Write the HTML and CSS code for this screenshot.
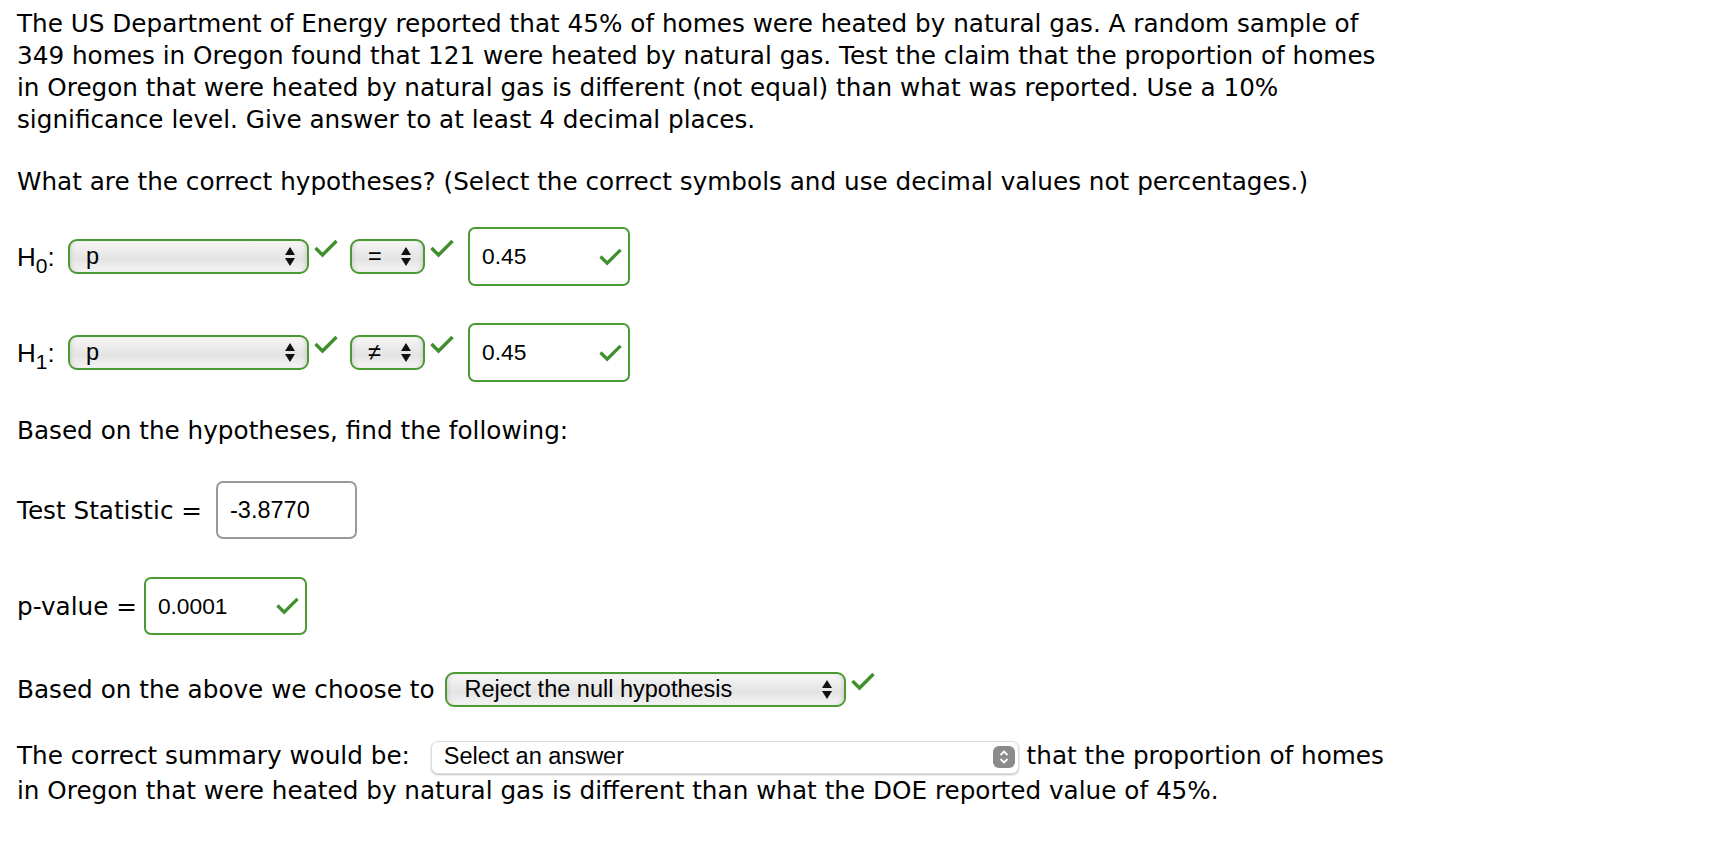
FILE: index.html
```html
<!DOCTYPE html>
<html>
<head>
    <title>Hypothesis Test - Proportion</title>
    <link rel="stylesheet" href="styles.css">
</head>
<body>
    <div class="question">
        <p class="intro">The US Department of Energy reported that 45% of homes were heated by natural gas. A random sample of 349 homes in Oregon found that 121 were heated by natural gas. Test the claim that the proportion of homes in Oregon that were heated by natural gas is different (not equal) than what was reported. Use a 10% significance level. Give answer to at least 4 decimal places.</p>

        <p class="ask">What are the correct hypotheses? (Select the correct symbols and use decimal values not percentages.)</p>

        <div class="hyp-row">
            <span class="hyp-label">H<sub>0</sub>:</span>
            <span class="pick pick-wide correct">
                <span class="pick-text">p</span>
                <svg class="updown" viewBox="0 0 10 19"><polygon points="5,0 10,8 0,8"/><polygon points="0,11 10,11 5,19"/></svg>
            </span>
            <svg class="tick" viewBox="0 0 24 35"><polyline points="1.5,9 8.5,16 22.5,2"/></svg>
            <span class="pick pick-small correct">
                <span class="pick-text">=</span>
                <svg class="updown" viewBox="0 0 10 19"><polygon points="5,0 10,8 0,8"/><polygon points="0,11 10,11 5,19"/></svg>
            </span>
            <svg class="tick" viewBox="0 0 24 35"><polyline points="1.5,9 8.5,16 22.5,2"/></svg>
            <span class="answer answer-hyp correct">
                <span class="answer-text">0.45</span>
                <svg class="tick-in" viewBox="0 0 24 18"><polyline points="1.5,8.5 8.5,15.5 22.5,1.5"/></svg>
            </span>
        </div>

        <div class="hyp-row hyp-row-alt">
            <span class="hyp-label">H<sub>1</sub>:</span>
            <span class="pick pick-wide correct">
                <span class="pick-text">p</span>
                <svg class="updown" viewBox="0 0 10 19"><polygon points="5,0 10,8 0,8"/><polygon points="0,11 10,11 5,19"/></svg>
            </span>
            <svg class="tick" viewBox="0 0 24 35"><polyline points="1.5,9 8.5,16 22.5,2"/></svg>
            <span class="pick pick-small correct">
                <span class="pick-text">&ne;</span>
                <svg class="updown" viewBox="0 0 10 19"><polygon points="5,0 10,8 0,8"/><polygon points="0,11 10,11 5,19"/></svg>
            </span>
            <svg class="tick" viewBox="0 0 24 35"><polyline points="1.5,9 8.5,16 22.5,2"/></svg>
            <span class="answer answer-hyp correct">
                <span class="answer-text">0.45</span>
                <svg class="tick-in" viewBox="0 0 24 18"><polyline points="1.5,8.5 8.5,15.5 22.5,1.5"/></svg>
            </span>
        </div>

        <p class="lead">Based on the hypotheses, find the following:</p>

        <div class="calc-row">
            <span class="calc-label">Test Statistic =</span>
            <span class="answer answer-stat">
                <span class="answer-text">-3.8770</span>
            </span>
        </div>

        <div class="calc-row calc-row-alt">
            <span class="calc-label">p-value =</span>
            <span class="answer answer-p correct">
                <span class="answer-text">0.0001</span>
                <svg class="tick-in" viewBox="0 0 24 18"><polyline points="1.5,8.5 8.5,15.5 22.5,1.5"/></svg>
            </span>
        </div>

        <div class="decide-row">
            <span>Based on the above we choose to</span>
            <span class="pick pick-decide correct">
                <span class="pick-text">Reject the null hypothesis</span>
                <svg class="updown" viewBox="0 0 10 19"><polygon points="5,0 10,8 0,8"/><polygon points="0,11 10,11 5,19"/></svg>
            </span>
            <svg class="tick" viewBox="0 0 24 35"><polyline points="1.5,9 8.5,16 22.5,2"/></svg>
        </div>

        <p class="summary">The correct summary would be:
            <span class="plain-pick">
                <span class="pick-text">Select an answer</span>
                <svg class="chev" viewBox="0 0 22 22"><rect x="0" y="0" width="22" height="22" rx="6"/><polyline points="7.5,9 11,5.5 14.5,9"/><polyline points="7.5,13 11,16.5 14.5,13"/></svg>
            </span>
            that the proportion of homes in Oregon that were heated by natural gas is different than what the DOE reported value of 45%.</p>
    </div>
</body>
</html>
```

FILE: styles.css
```css
body {
    margin: 0;
    padding: 0;
    background-color: #fff;
    color: #000;
    font-family: "DejaVu Sans", Verdana, sans-serif;
    font-size: 24.7px;
}

.question {
    width: 1386px;
    padding: 8px 0 0 17px;
}

.intro {
    margin: 0;
    line-height: 32px;
}

.ask {
    margin: 30px 0 0;
    line-height: 32px;
}

.lead {
    margin: 33px 0 0;
    line-height: 32px;
}

/* hypothesis rows */
.hyp-row {
    display: flex;
    align-items: center;
    height: 59px;
    margin-top: 29px;
}

.hyp-row-alt {
    margin-top: 37px;
}

.hyp-label {
    width: 51px;
    font-family: "Liberation Sans", Arial, sans-serif;
    font-size: 26px;
    line-height: 30px;
}

.hyp-label sub {
    font-size: 21px;
    vertical-align: -7px;
    line-height: 0;
}

/* mac style pull downs */
.pick {
    display: flex;
    align-items: center;
    justify-content: space-between;
    box-sizing: border-box;
    height: 35px;
    padding: 0 12px 0 16px;
    border: 2px solid #aaa;
    border-radius: 9px;
    background: linear-gradient(to bottom, #f7f7f7 0%, #e9e9e9 40%, #e4e4e4 60%, #f4f4f4 100%);
    box-shadow: inset 3px 0 4px -2px rgba(0, 0, 0, 0.12), inset -3px 0 4px -2px rgba(0, 0, 0, 0.12);
    font-family: "Liberation Sans", Arial, sans-serif;
    font-size: 23.5px;
}

.pick.correct {
    border-color: #4b9a34;
}

.pick-wide {
    width: 241px;
}

.pick-small {
    width: 75px;
    margin-left: 12px;
    padding-left: 16px;
}

.pick-decide {
    width: 401px;
    margin-left: 11px;
    padding-left: 17px;
}

.updown {
    width: 10px;
    height: 19px;
    flex-shrink: 0;
    fill: #111;
}

.tick {
    width: 24px;
    height: 35px;
    margin-left: 5px;
    flex-shrink: 0;
    fill: none;
    stroke: #3f8f2c;
    stroke-width: 3.4;
}

/* answer boxes */
.answer {
    display: flex;
    align-items: center;
    justify-content: space-between;
    box-sizing: border-box;
    padding: 0 6px 0 12px;
    border: 2px solid #9a9a9a;
    border-radius: 7px;
    background-color: #fff;
    font-family: "Liberation Sans", Arial, sans-serif;
    font-size: 22.75px;
}

.answer.correct {
    border-color: #4b9a34;
}

.answer-hyp {
    width: 162px;
    height: 59px;
    margin-left: 14px;
}

.answer-stat {
    width: 141px;
    height: 58px;
    margin-left: 14px;
    font-size: 23.5px;
}

.answer-p {
    width: 163px;
    height: 58px;
    margin-left: 7px;
}

.tick-in {
    width: 23px;
    height: 18px;
    fill: none;
    stroke: #3f8f2c;
    stroke-width: 3.4;
}

.calc-row {
    display: flex;
    align-items: center;
    height: 58px;
    margin-top: 34px;
}

.calc-row-alt {
    margin-top: 38px;
}

.decide-row {
    display: flex;
    align-items: center;
    height: 35px;
    margin-top: 37px;
}

.decide-row .tick {
    margin-left: 5px;
}

/* summary sentence */
.summary {
    margin: 32px 0 0;
    line-height: 34px;
}

.plain-pick {
    display: inline-flex;
    align-items: center;
    justify-content: space-between;
    box-sizing: border-box;
    width: 588px;
    height: 33px;
    padding: 0 3px 0 12px;
    margin: 0 0 0 13px;
    vertical-align: middle;
    border: 1px solid #dcdcdc;
    border-radius: 7px;
    background-color: #fff;
    box-shadow: 0 1px 2px rgba(0, 0, 0, 0.25);
    font-family: "Liberation Sans", Arial, sans-serif;
    font-size: 23.5px;
    line-height: 1;
}

.chev {
    width: 22px;
    height: 22px;
}

.chev rect {
    fill: #8b8b8b;
}

.chev polyline {
    fill: none;
    stroke: #fff;
    stroke-width: 1.8;
}
```
